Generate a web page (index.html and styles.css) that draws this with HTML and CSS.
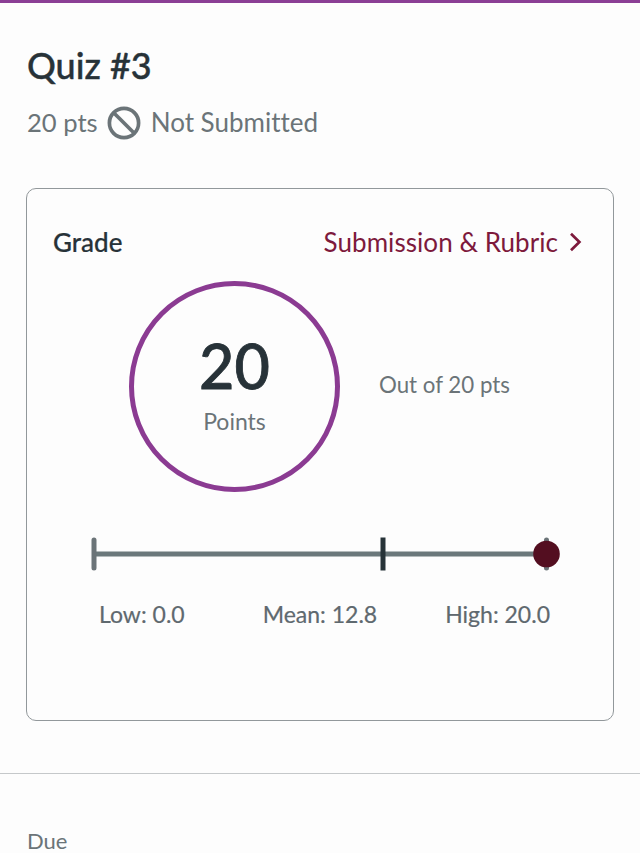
FILE: index.html
```html
<!DOCTYPE html>
<html lang="en">
<head>
<meta charset="utf-8">
<title>Quiz #3</title>
<link rel="stylesheet" href="styles.css">
</head>
<body>
<header class="summary">
<h1 class="title">Quiz #3</h1>
<div class="status">
<span class="points">20 pts</span>
<svg class="status-icon" width="34" height="34" viewBox="0 0 34 34" fill="none" stroke="#6b7478" stroke-width="3.7"><circle cx="17" cy="17" r="14.6"/><path d="M6.7 6.7 27.3 27.3"/></svg>
<span class="state">Not Submitted</span>
</div>
</header>
<main class="card">
<div class="card-head">
<h2 class="card-title">Grade</h2>
<a class="link"><span class="link-text">Submission &amp; Rubric</span><svg class="chevron" width="13" height="20" viewBox="0 0 13 20" fill="none" stroke="#7d1a3c" stroke-width="2.7"><path d="m2 1.8 8.4 8.2L2 18.2"/></svg></a>
</div>
<div class="score">
<div class="ring"><span class="value">20</span><span class="unit">Points</span></div>
<span class="out-of">Out of 20 pts</span>
</div>
<svg class="range" width="472" height="34" viewBox="0 0 472 34"><path d="M4 17H456" stroke="#6b787b" stroke-width="5"/><path d="M4 3V31M456.5 3V31" stroke="#6b7478" stroke-width="5" stroke-linecap="round"/><path d="M293 .5V33.5" stroke="#273338" stroke-width="5"/><circle cx="456.5" cy="17" r="13.3" fill="#530e20"/></svg>
<div class="stats"><span class="low">Low: 0.0</span><span class="mean">Mean: 12.8</span><span class="high">High: 20.0</span></div>
</main>
<footer class="due"><span class="due-text">Due</span></footer>
</body>
</html>
```

FILE: styles.css
```css
* { box-sizing: border-box; }
body { margin: 0; height: 853px; overflow: hidden; background: #fdfdfd; color: #273238; font-family: Lato, sans-serif; font-variant-ligatures: none; border-top: 3px solid #8b3f95; }
h1, h2 { margin: 0; }
.summary { height: 185px; padding: 40px 27px 0; }
.title { font-size: 36px; line-height: 44px; font-weight: 500; -webkit-text-stroke: 0.4px currentColor; }
.status { display: flex; align-items: center; height: 34px; margin-top: 19px; color: #6b7478; font-size: 26px; }
.points { font-size: 25.6px; }
.points, .state { position: relative; top: -1px; }
.status-icon { margin: 0 10px 0 9px; }
.card { width: 588px; height: 533px; margin-left: 26px; border: 1px solid #92989b; border-radius: 10px; }
.card-head { display: flex; justify-content: space-between; align-items: center; height: 40px; margin-top: 33px; padding: 0 31px 0 26px; }
.card-title { font-size: 26px; font-weight: 500; -webkit-text-stroke: 0.2px currentColor; }
.link { display: flex; align-items: center; gap: 11px; color: #7d1a3c; font-size: 26px; letter-spacing: 0.06px; }
.score { display: flex; align-items: center; height: 211px; margin: 19px 0 0 102px; gap: 39px; color: #6b7478; font-size: 23px; }
.ring { display: flex; flex-direction: column; align-items: center; width: 211px; height: 211px; border: 5px solid #8b3b92; border-radius: 50%; padding-top: 44px; }
.value { color: #273238; font-size: 61px; line-height: 72px; font-weight: 500; -webkit-text-stroke: 0.8px currentColor; }
.unit { line-height: 28px; margin-top: 5px; }
.out-of { font-size: 22.3px; padding-bottom: 4px; }
.range { display: block; margin: 45px 0 0 63px; }
.stats { display: flex; justify-content: space-between; margin: 29px 63px 0 72px; color: #5f696f; font-size: 23px; line-height: 28px; -webkit-text-stroke: 0.2px currentColor; }
.mean { padding-left: 10px; }
.due { margin-top: 52px; border-top: 1px solid #c5c8ca; padding: 54px 27px 0; font-size: 22px; line-height: 26px; color: #6b7478; }
```
